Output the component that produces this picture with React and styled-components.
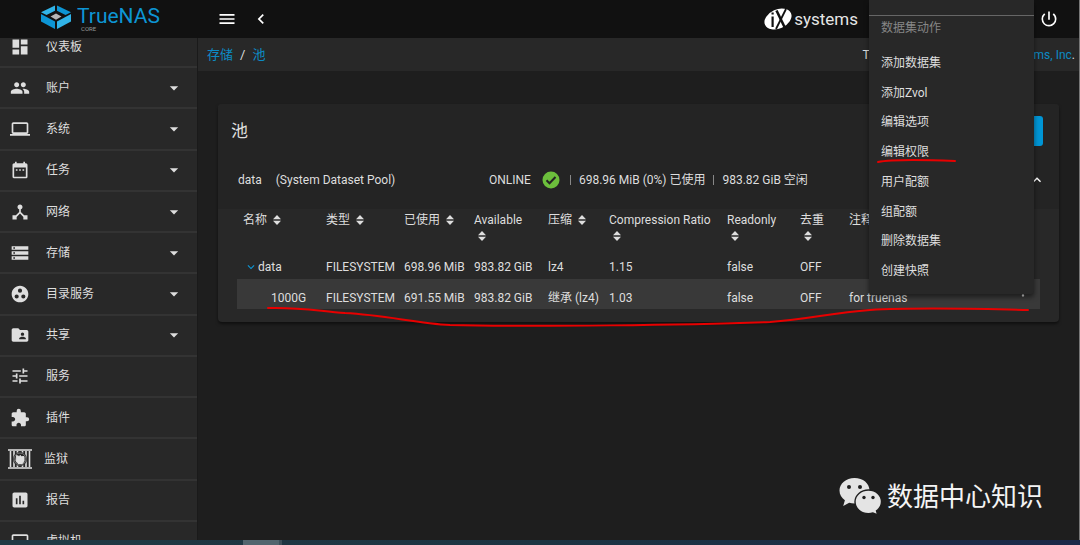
import React, {useState} from 'react';
import styled, {createGlobalStyle} from 'styled-components';
import {
    MdDashboard, MdPeople, MdLaptop, MdDateRange, MdDeviceHub, MdStorage,
    MdGroupWork, MdFolderShared, MdTune, MdExtension, MdInsertChart,
    MdArrowDropDown, MdMenu, MdChevronLeft, MdPowerSettingsNew, MdExpandLess,
    MdExpandMore, MdMoreVert
} from 'react-icons/md';

const GlobalStyle = createGlobalStyle`
    * {
        box-sizing: border-box;
    }
    body {
        margin: 0;
        background: #1e1e1e;
        color: #dedede;
        font-family: Roboto, "Noto Sans CJK SC", sans-serif;
        font-size: 12px;
        line-height: 16px;
    }
    button {
        padding: 0;
        border: 0;
        background: none;
        color: inherit;
        font: inherit;
        cursor: pointer;
    }
    a {
        color: #0d8ac4;
        text-decoration: none;
    }
`

const Screen = styled.div`
    position: relative;
    display: flex;
    flex-direction: column;
    height: 100vh;
    overflow: hidden;
`
const Header = styled.header`
    display: flex;
    align-items: center;
    flex: 0 0 38px;
    background: #111111;
    border-right: 1px solid #777777;
`
const Brand = styled.a`
    display: flex;
    align-items: flex-start;
    width: 198px;
    height: 38px;
    padding: 5px 0 0 41px;
    gap: 6px;
`
const BrandName = styled.span`
    display: flex;
    flex-direction: column;
    color: #0d95d4;
    font-size: 21px;
    line-height: 22px;
`
const BrandEdition = styled.small`
    padding-left: 4px;
    color: #9a9a9a;
    font-size: 6px;
    line-height: 4px;
`
const HeaderButton = styled.button`
    display: flex;
    align-items: center;
    justify-content: center;
    width: 34px;
    height: 34px;
    color: #ffffff;
    font-size: 20px;
    margin: 0 ${props => props.$right || 0}px 0 ${props => props.$left || 0}px;
`
const Vendor = styled.a`
    display: flex;
    align-items: center;
    gap: 2px;
    margin-left: auto;
    margin-right: 174px;
    color: #e6e6e6;
    font-size: 17px;
    line-height: 24px;
`
const Body = styled.div`
    display: flex;
    flex: 1;
    min-height: 0;
    border-right: 1px solid #777777;
`
const Sidebar = styled.nav`
    display: flex;
    flex: 0 0 198px;
    overflow: hidden;
    border-right: 1px solid #1a1a1a;
    background: #282828;
`
const SideList = styled.ul`
    display: flex;
    flex-direction: column;
    flex: 1;
    margin: -11px 0 -23px;
    padding: 0;
    list-style: none;
`
const SideItem = styled.li`
    display: flex;
    flex: 1;
    border-bottom: 2px solid #333333;
`
const SideLink = styled.button`
    display: grid;
    grid-template-columns: ${props => props.$wide ? 24 : 20}px 1fr 20px;
    align-items: center;
    column-gap: ${props => props.$wide ? 12 : 16}px;
    width: 100%;
    padding: 0 13px 0 ${props => props.$wide ? 8 : 10}px;
    text-align: left;

    svg {
        font-size: 20px;
    }
`
const Main = styled.main`
    flex: 1;
    min-width: 0;
`
const TopLine = styled.div`
    display: flex;
    align-items: center;
    justify-content: space-between;
    height: 33px;
    padding: 0 4px 0 9px;
    background: #282828;
`
const Crumbs = styled.div`
    display: flex;
    gap: 7px;
    font-size: 13px;
`
const Copyright = styled.div`
    font-size: 12px;
`
const Card = styled.section`
    margin: 33px 20px 0;
    border-radius: 4px;
    background: #282828;
    box-shadow: 0 2px 3px rgba(0, 0, 0, 0.5);
`
const CardHead = styled.div`
    display: flex;
    align-items: center;
    justify-content: space-between;
    height: 52px;
    padding: 2px 16px 0 13px;
    border-radius: 4px 4px 0 0;
    background: #242424;
`
const CardTitle = styled.h1`
    margin: 0;
    font-size: 17px;
    font-weight: 400;
    line-height: 24px;
`
const AddButton = styled.button`
    width: 64px;
    height: 30px;
    border-radius: 3px;
    background: #0095d5;
`
const PoolBar = styled.div`
    display: flex;
    align-items: center;
    height: 53px;
    padding: 0 14px 5px 20px;
    background: #242424;
`
const PoolName = styled.div`
    display: flex;
    flex: 0 0 251px;
    gap: 14px;
`
const PoolState = styled.div`
    display: flex;
    align-items: center;
    gap: 8px;
`
const Check = styled.svg`
    width: 18px;
    height: 18px;
    margin: 0 2px 0 3px;
`
const Bar = styled.i`
    width: 1px;
    height: 10px;
    background: #888888;
`
const Collapse = styled.button`
    display: flex;
    margin-left: auto;
    color: #ffffff;
    font-size: 16px;
`
const TableWrap = styled.div`
    padding: 0 19px 13px;
`
const Table = styled.table`
    width: 100%;
    table-layout: fixed;
    border-collapse: collapse;
`
const Col = styled.col`
    width: ${props => props.$width}px;
`
const Th = styled.th`
    height: 44px;
    padding: 3px 0 0 6px;
    font-weight: 400;
    text-align: left;
    vertical-align: top;
    white-space: ${props => props.$nowrap ? 'nowrap' : 'normal'};
`
const SortButton = styled.button`
    display: ${props => props.$below ? 'block' : 'inline-block'};
    height: 16px;
    margin-left: ${props => props.$below ? 4 : 6}px;
    vertical-align: top;

    svg {
        display: block;
    }
`
const Row = styled.tr`
    background: ${props => props.$active ? '#393939' : 'transparent'};
`
const Td = styled.td`
    height: ${props => props.$tall ? 30 : 26}px;
    padding: ${props => props.$tall ? '8px 0 0 6px' : '2px 0 0 6px'};
    white-space: nowrap;
`
const NameCell = styled.span`
    display: flex;
    align-items: center;
    padding-left: ${props => props.$indent}px;

    svg {
        color: #0d95d4;
        font-size: 14px;
    }
`
const RowMenu = styled.button`
    display: block;
    margin: 0 10px 6px auto;
    font-size: 14px;
    line-height: 0;
`
const Menu = styled.div`
    position: absolute;
    top: 0;
    right: 46px;
    z-index: 2;
    width: 165px;
    padding-bottom: 8px;
    border-radius: 0 0 3px 3px;
    background: #282828;
    box-shadow: 0 3px 5px rgba(0, 0, 0, 0.5);
`
const MenuTitle = styled.div`
    height: 33px;
    margin-top: 15px;
    padding: 4px 12px 0;
    border-top: 1px solid #666666;
    color: #868686;
`
const MenuList = styled.div`
    display: grid;
    grid-auto-rows: 1fr;
    height: 238px;
`
const MenuItem = styled.button`
    padding: 0 12px;
    text-align: left;

    &:hover {
        background: #333333;
    }
`
const Marks = styled.svg`
    position: absolute;
    top: 0;
    left: 0;
    z-index: 3;
    pointer-events: none;
`
const Watermark = styled.div`
    position: absolute;
    right: 37px;
    bottom: 28px;
    display: flex;
    align-items: center;
    gap: 5px;
    color: #f4f4f4;
    font-size: 26px;
    line-height: 40px;

    svg {
        margin-bottom: 2px;
    }
`
const Taskbar = styled.footer`
    flex: 0 0 5px;
    padding-left: 243px;
    background: linear-gradient(90deg, #203a44, #1c3442 50%, #1b2848);
`
const TaskbarTab = styled.div`
    width: 39px;
    height: 5px;
    border-right: 3px solid #3c505a;
    background: #52656e;
`

const sideItems = [
    {label: '仪表板', icon: <MdDashboard/>},
    {label: '账户', icon: <MdPeople/>, more: true},
    {label: '系统', icon: <MdLaptop/>, more: true},
    {label: '任务', icon: <MdDateRange/>, more: true},
    {label: '网络', icon: <MdDeviceHub/>, more: true},
    {label: '存储', icon: <MdStorage/>, more: true},
    {label: '目录服务', icon: <MdGroupWork/>, more: true},
    {label: '共享', icon: <MdFolderShared/>, more: true},
    {label: '服务', icon: <MdTune/>},
    {label: '插件', icon: <MdExtension/>},
    {label: '监狱', icon: <JailIcon/>, wide: true},
    {label: '报告', icon: <MdInsertChart/>},
    {label: '虚拟机', icon: <MdLaptop/>}
]

const columns = [
    {label: '名称', width: 83},
    {label: '类型', width: 78},
    {label: '已使用', width: 70},
    {label: 'Available', width: 74, below: true},
    {label: '压缩', width: 61},
    {label: 'Compression Ratio', width: 118, below: true},
    {label: 'Readonly', width: 73, below: true},
    {label: '去重', width: 49, below: true},
    {label: '注释'}
]

const datasets = [
    {name: 'data', open: true, values: ['FILESYSTEM', '698.96 MiB', '983.82 GiB', 'lz4', '1.15', 'false', 'OFF', '']},
    {name: '1000G', active: true, values: ['FILESYSTEM', '691.55 MiB', '983.82 GiB', '继承 (lz4)', '1.03', 'false', 'OFF', 'for truenas']}
]

const actions = ['添加数据集', '添加Zvol', '编辑选项', '编辑权限', '用户配额', '组配额', '删除数据集', '创建快照']

function JailIcon () {
    return (
        <svg width="24" height="20" viewBox="0 0 24 20" fill="none" stroke="#dedede">
            <path d="M0 1h24M0 19h24" stroke="#b5b5b5" strokeWidth="2"/>
            <path d="M2.5 2v16M6 2v16M9.5 2v16M14.5 2v16M18 2v16M21.5 2v16" strokeWidth="1.6"/>
            <circle cx="12" cy="10" r="7" fill="#282828" stroke="none"/>
            <circle cx="12" cy="10" r="6" stroke="#777777"/>
            <path d="M8.5 6.500l2.500 1 1.500-1 1 1.200 2.500-.2v4.500l-1.500 2.500h-4.500l-2-2.500z" fill="#dedede" strokeLinejoin="round"/>
        </svg>
    )
}

function CubeLogo () {
    return (
        <svg width="30" height="25" viewBox="0 0 30 25" aria-hidden="true">
            <path d="M14 .5v5.300L5.500 10 0 7.200z" fill="#31b4e8"/>
            <path d="M16 .5v5.300L24.500 10 30 7.200z" fill="#0d95d4"/>
            <path d="M0 9l14 7.500V24L0 16.600z" fill="#0d95d4"/>
            <path d="M30 9l-14 7.500V24l14-7.400z" fill="#31b4e8"/>
            <path d="M15 8.500l5.500 3.100-5.500 3.100-5.500-3.100z" fill="#b5b5b5"/>
        </svg>
    )
}

function VendorLogo () {
    return (
        <svg width="28" height="24" viewBox="0 0 28 24" aria-hidden="true">
            <ellipse cx="14" cy="12" rx="14.2" ry="9.6" transform="rotate(-24 14 12)" fill="#ffffff"/>
            <g stroke="#111111" fill="none">
                <path d="M8.6 9.500V20M8.600 5.400v2.200" strokeWidth="2.200"/>
                <path d="M12.500 3.500L21 21" strokeWidth="2.600"/>
                <path d="M22 2L12 22" strokeWidth="1.800"/>
            </g>
        </svg>
    )
}

function SortIcon () {
    return (
        <svg width="8" height="10" viewBox="0 0 8 10" fill="#dedede" aria-hidden="true">
            <path d="M4 0l4 4.300H0zM4 10l4-4.300H0z"/>
        </svg>
    )
}

function ChatIcon () {
    return (
        <svg width="43" height="38" viewBox="0 0 43 38" aria-hidden="true">
            <path d="M15.500 1C7 1 .5 6.600.5 13.600c0 4 2.100 7.400 5.400 9.700L4.200 29l6-3.200c1.700.5 3.500.7 5.300.7 8.500 0 15-5.600 15-12.900S24 1 15.500 1z" fill="#e4e4e4"/>
            <path d="M29.500 13C22 13 16 18.200 16 24.800s6 11.800 13.500 11.800c1.500 0 3-.2 4.400-.6l4.800 2-1.200-4.200c3.200-2.200 5-5.400 5-9C42.500 18.200 37 13 29.500 13z" fill="#e4e4e4" stroke="#1e1e1e" strokeWidth="1.400"/>
            <g fill="#1e1e1e">
                <circle cx="10" cy="10" r="2"/>
                <circle cx="21" cy="10" r="2"/>
                <circle cx="25" cy="20.500" r="1.700"/>
                <circle cx="34" cy="20.500" r="1.700"/>
            </g>
        </svg>
    )
}

function SideMenu () {
    return (
        <Sidebar>
            <SideList>
                {sideItems.map(item => (
                    <SideItem key={item.label}>
                        <SideLink $wide={item.wide}>
                            {item.icon}
                            <span>{item.label}</span>
                            {item.more && <MdArrowDropDown/>}
                        </SideLink>
                    </SideItem>
                ))}
            </SideList>
        </Sidebar>
    )
}

function DatasetTable (props) {
    return (
        <TableWrap>
            <Table>
                <colgroup>
                    {columns.map(col => <Col key={col.label} $width={col.width}/>)}
                    <Col $width={40}/>
                </colgroup>
                <thead>
                    <tr>
                        {columns.map(col => (
                            <Th key={col.label} $nowrap={!col.below}>
                                {col.label}
                                <SortButton $below={col.below} aria-label={`排序 ${col.label}`}><SortIcon/></SortButton>
                            </Th>
                        ))}
                        <Th/>
                    </tr>
                </thead>
                <tbody>
                    {datasets.map(item => (
                        <Row key={item.name} $active={item.active}>
                            <Td $tall={item.active}>
                                <NameCell $indent={item.open ? 1 : 28}>
                                    {item.open && <MdExpandMore/>}
                                    {item.name}
                                </NameCell>
                            </Td>
                            {item.values.map((value, i) => <Td key={i} $tall={item.active}>{value}</Td>)}
                            <Td>
                                {item.active && <RowMenu aria-label="动作" onClick={props.onClickMenu}><MdMoreVert/></RowMenu>}
                            </Td>
                        </Row>
                    ))}
                </tbody>
            </Table>
        </TableWrap>
    )
}

function App () {
    const [menuOpen, setMenuOpen] = useState(true)
    const [poolOpen, setPoolOpen] = useState(true)

    return (
        <Screen>
            <GlobalStyle/>
            <Header>
                <Brand href="#">
                    <CubeLogo/>
                    <BrandName>TrueNAS<BrandEdition>CORE</BrandEdition></BrandName>
                </Brand>
                <HeaderButton $left={12} aria-label="菜单"><MdMenu/></HeaderButton>
                <HeaderButton aria-label="收起"><MdChevronLeft/></HeaderButton>
                <Vendor href="#"><VendorLogo/>systems</Vendor>
                <HeaderButton $right={13} aria-label="电源"><MdPowerSettingsNew/></HeaderButton>
            </Header>
            <Body>
                <SideMenu/>
                <Main>
                    <TopLine>
                        <Crumbs>
                            <a href="#">存储</a>
                            <span>/</span>
                            <a href="#">池</a>
                        </Crumbs>
                        <Copyright>TrueNAS CORE © 2021 - <a href="#">iXsystems, Inc</a>.</Copyright>
                    </TopLine>
                    <Card>
                        <CardHead>
                            <CardTitle>池</CardTitle>
                            <AddButton aria-label="添加"/>
                        </CardHead>
                        <PoolBar>
                            <PoolName>
                                <span>data</span>
                                <span>(System Dataset Pool)</span>
                            </PoolName>
                            <PoolState>
                                <span>ONLINE</span>
                                <Check viewBox="0 0 18 18">
                                    <circle cx="9" cy="9" r="8.500" fill="#6cbf3c"/>
                                    <path d="M4.500 9.300l3 3 6-6.300" fill="none" stroke="#242424" strokeWidth="2"/>
                                </Check>
                                <Bar/>
                                <span>698.96 MiB (0%) 已使用</span>
                                <Bar/>
                                <span>983.82 GiB 空闲</span>
                            </PoolState>
                            <Collapse aria-label="折叠" onClick={() => setPoolOpen(!poolOpen)}><MdExpandLess/></Collapse>
                        </PoolBar>
                        {poolOpen && <DatasetTable onClickMenu={() => setMenuOpen(!menuOpen)}/>}
                    </Card>
                </Main>
            </Body>
            <Taskbar><TaskbarTab/></Taskbar>
            {menuOpen && (
                <Menu>
                    <MenuTitle>数据集动作</MenuTitle>
                    <MenuList>
                        {actions.map(action => <MenuItem key={action}>{action}</MenuItem>)}
                    </MenuList>
                </Menu>
            )}
            <Marks width="1080" height="340" fill="none" stroke="#e80000" strokeWidth="2" strokeLinecap="round">
                <path d="M878 162C888 160 905 159 955 161"/>
                <path d="M268 308C300 307 318 311 345 313C385 315 415 323 450 325C530 327 690 325 770 322C810 319 830 313 870 310C920 307 980 309 1028 310"/>
            </Marks>
            <Watermark><ChatIcon/>数据中心知识</Watermark>
        </Screen>
    )
}
export default App
